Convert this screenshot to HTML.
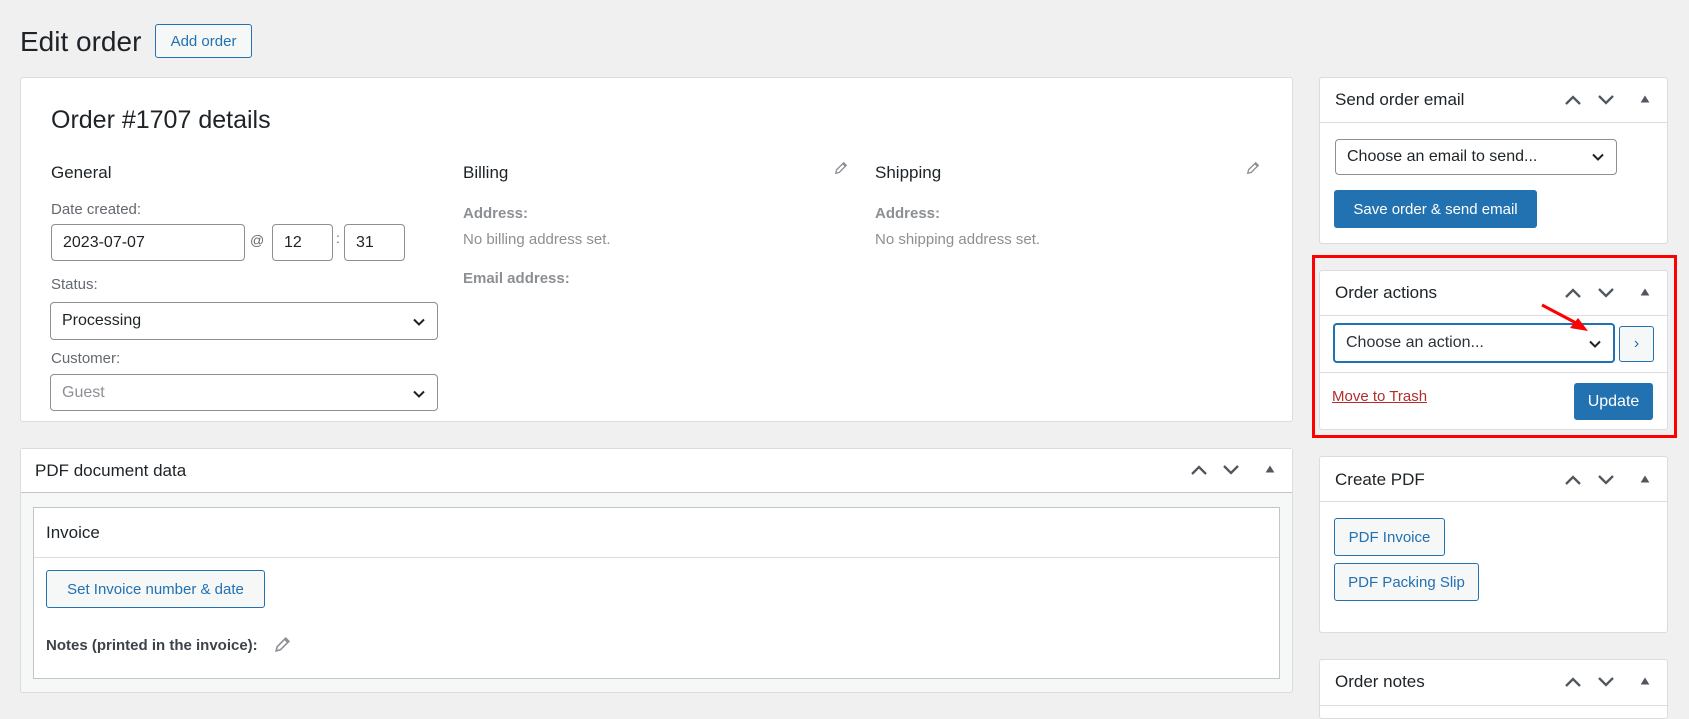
<!DOCTYPE html>
<html><head><meta charset="utf-8"><style>
*{box-sizing:border-box;margin:0;padding:0}
body{width:1689px;height:711px;background:#f0f0f1;font-family:"Liberation Sans",sans-serif;color:#1d2327;position:relative;overflow:hidden}
.a{position:absolute}
.card{position:absolute;background:#fff;border:1px solid #dcdcde;border-radius:3px}
.inp{position:absolute;border:1px solid #8c8f94;border-radius:4px;background:#fff;font-size:16px;padding-left:11px;display:flex;align-items:center}
.lbl{position:absolute;font-size:15px;color:#646970}
.h{position:absolute;font-size:17px;color:#1d2327}
.btn2{position:absolute;border:1px solid #2271b1;border-radius:3px;background:#f6f7f7;color:#2271b1;font-size:15px;display:flex;align-items:center;justify-content:center}
.btnp{position:absolute;background:#2271b1;border-radius:3px;color:#fff;font-size:16px;display:flex;align-items:center;justify-content:center}
.line{position:absolute;height:1px;background:#dcdcde}
</style></head><body>
<svg width="0" height="0" style="position:absolute"><defs>
<symbol id="chev" viewBox="0 0 16 16"><path d="M3 5.5l5 5 5-5" fill="none" stroke="#1d2327" stroke-width="2"/></symbol>
<symbol id="up" viewBox="0 0 18 18"><path d="M2 13l7-7 7 7" fill="none" stroke="#50575e" stroke-width="2.3"/></symbol>
<symbol id="dn" viewBox="0 0 18 18"><path d="M2 5l7 7 7-7" fill="none" stroke="#50575e" stroke-width="2.3"/></symbol>
<symbol id="tri" viewBox="0 0 16 16"><path d="M3 12L8 4l5 8z" fill="#50575e"/></symbol>
<symbol id="pen" viewBox="0 0 16 16"><path d="M11 2l3 3-8 8-4 1 1-4z M10 3l3 3" fill="none" stroke="#8c8f94" stroke-width="1.5"/></symbol>
</defs></svg>

<div class="a" style="left:20px;top:26px;font-size:28px;color:#1d2327">Edit order</div>
<div class="btn2" style="left:155px;top:24px;width:97px;height:34px;font-size:15px;background:#f6f7f7">Add order</div>

<div class="card" style="left:20px;top:77px;width:1273px;height:345px"></div>
<div class="a" style="left:51px;top:106px;font-size:25px">Order #1707 details</div>
<div class="h" style="left:51px;top:163px;font-size:17px">General</div>
<div class="lbl" style="left:51px;top:201px">Date created:</div>
<div class="inp" style="left:51px;top:224px;width:194px;height:37px">2023-07-07</div>
<div class="a" style="left:250px;top:232px;font-size:14px;color:#646970">@</div>
<div class="inp" style="left:272px;top:224px;width:61px;height:37px">12</div>
<div class="a" style="left:336px;top:230px;font-size:14px;color:#646970">:</div>
<div class="inp" style="left:344px;top:224px;width:61px;height:37px">31</div>
<div class="lbl" style="left:51px;top:276px">Status:</div>
<div class="inp" style="left:50px;top:302px;width:388px;height:38px">Processing<svg class="a" style="right:10px;top:11px" width="16" height="16"><use href="#chev"/></svg></div>
<div class="lbl" style="left:51px;top:350px">Customer:</div>
<div class="inp" style="left:50px;top:374px;width:388px;height:37px;color:#8c8f94">Guest<svg class="a" style="right:10px;top:11px" width="16" height="16"><use href="#chev"/></svg></div>

<div class="h" style="left:463px;top:163px;font-size:17px">Billing</div>
<svg class="a" style="left:834px;top:161px" width="14" height="14"><use href="#pen"/></svg>
<div class="lbl" style="left:463px;top:205px;font-weight:bold;color:#8c8f94">Address:</div>
<div class="lbl" style="left:463px;top:231px;color:#8c8f94">No billing address set.</div>
<div class="lbl" style="left:463px;top:270px;font-weight:bold;color:#8c8f94">Email address:</div>

<div class="h" style="left:875px;top:163px;font-size:17px">Shipping</div>
<svg class="a" style="left:1246px;top:161px" width="14" height="14"><use href="#pen"/></svg>
<div class="lbl" style="left:875px;top:205px;font-weight:bold;color:#8c8f94">Address:</div>
<div class="lbl" style="left:875px;top:231px;color:#8c8f94">No shipping address set.</div>

<div class="card" style="left:20px;top:448px;width:1273px;height:245px;background:#f6f7f7"></div>
<div class="a" style="left:21px;top:449px;width:1271px;height:44px;background:#fff;border-bottom:1px solid #c3c4c7"></div>
<div class="h" style="left:35px;top:461px;font-size:17px">PDF document data</div>
<svg class="a" style="left:1190px;top:461px" width="18" height="18"><use href="#up"/></svg>
<svg class="a" style="left:1222px;top:461px" width="18" height="18"><use href="#dn"/></svg>
<svg class="a" style="left:1263px;top:462px" width="14" height="14"><use href="#tri"/></svg>
<div class="a" style="left:33px;top:507px;width:1247px;height:172px;background:#fff;border:1px solid #c3c4c7"></div>
<div class="line" style="left:34px;top:557px;width:1245px"></div>
<div class="h" style="left:46px;top:523px;font-size:17px">Invoice</div>
<div class="btn2" style="left:46px;top:570px;width:219px;height:38px">Set Invoice number &amp; date</div>
<div class="a" style="left:46px;top:637px;font-size:15px;font-weight:bold;color:#3c434a">Notes (printed in the invoice):</div>
<svg class="a" style="left:274px;top:636px" width="17" height="17"><use href="#pen"/></svg>

<div class="card" style="left:1319px;top:77px;width:349px;height:167px"></div>
<div class="line" style="left:1320px;top:122px;width:347px"></div>
<div class="h" style="left:1335px;top:90px;font-size:17px">Send order email</div>
<svg class="a" style="left:1564px;top:91px" width="18" height="18"><use href="#up"/></svg>
<svg class="a" style="left:1597px;top:91px" width="18" height="18"><use href="#dn"/></svg>
<svg class="a" style="left:1638px;top:92px" width="14" height="14"><use href="#tri"/></svg>
<div class="inp" style="left:1335px;top:139px;width:282px;height:36px">Choose an email to send...<svg class="a" style="right:10px;top:9px" width="16" height="16"><use href="#chev"/></svg></div>
<div class="btnp" style="left:1334px;top:190px;width:203px;height:38px;font-size:15px">Save order &amp; send email</div>

<div class="a" style="left:1312px;top:255px;width:365px;height:183px;border:3px solid #f00"></div>
<div class="card" style="left:1319px;top:270px;width:349px;height:160px"></div>
<div class="line" style="left:1320px;top:315px;width:347px"></div>
<div class="line" style="left:1320px;top:372px;width:347px"></div>
<div class="h" style="left:1335px;top:283px;font-size:17px">Order actions</div>
<svg class="a" style="left:1564px;top:284px" width="18" height="18"><use href="#up"/></svg>
<svg class="a" style="left:1597px;top:284px" width="18" height="18"><use href="#dn"/></svg>
<svg class="a" style="left:1638px;top:285px" width="14" height="14"><use href="#tri"/></svg>
<div class="inp" style="left:1333px;top:323px;width:282px;height:40px;border:2px solid #2271b1;color:#2c3338">Choose an action...<svg class="a" style="right:10px;top:11px" width="16" height="16"><use href="#chev"/></svg></div>
<div class="btn2" style="left:1619px;top:326px;width:35px;height:36px;font-size:16px">›</div>
<svg class="a" style="left:1540px;top:302px" width="60" height="35"><path d="M2 3L38 22" stroke="#f00" stroke-width="3"/><path d="M48 29L30 26L38 16z" fill="#f00"/></svg>
<div class="a" style="left:1332px;top:388px;font-size:15px;color:#b32d2e;text-decoration:underline">Move to Trash</div>
<div class="btnp" style="left:1574px;top:383px;width:79px;height:37px">Update</div>

<div class="card" style="left:1319px;top:456px;width:349px;height:177px"></div>
<div class="line" style="left:1320px;top:501px;width:347px"></div>
<div class="h" style="left:1335px;top:470px;font-size:17px">Create PDF</div>
<svg class="a" style="left:1564px;top:471px" width="18" height="18"><use href="#up"/></svg>
<svg class="a" style="left:1597px;top:471px" width="18" height="18"><use href="#dn"/></svg>
<svg class="a" style="left:1638px;top:472px" width="14" height="14"><use href="#tri"/></svg>
<div class="btn2" style="left:1334px;top:518px;width:111px;height:38px">PDF Invoice</div>
<div class="btn2" style="left:1334px;top:563px;width:145px;height:38px">PDF Packing Slip</div>

<div class="card" style="left:1319px;top:659px;width:349px;height:60px"></div>
<div class="line" style="left:1320px;top:705px;width:347px"></div>
<div class="h" style="left:1335px;top:672px;font-size:17px">Order notes</div>
<svg class="a" style="left:1564px;top:673px" width="18" height="18"><use href="#up"/></svg>
<svg class="a" style="left:1597px;top:673px" width="18" height="18"><use href="#dn"/></svg>
<svg class="a" style="left:1638px;top:674px" width="14" height="14"><use href="#tri"/></svg>
</body></html>
